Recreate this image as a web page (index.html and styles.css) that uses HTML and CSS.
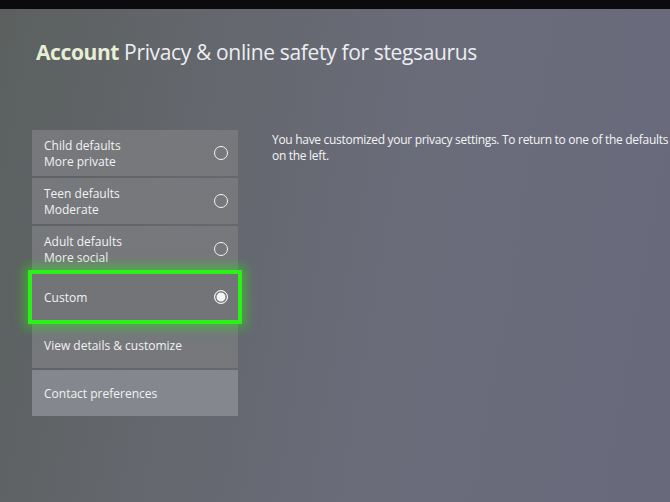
FILE: index.html
```html
<!DOCTYPE html>
<html lang="en">
<head>
    <meta charset="UTF-8">
    <meta name="viewport" content="width=device-width, initial-scale=1.0">
    <title>Privacy &amp; online safety</title>
    <link rel="stylesheet" href="styles.css">
</head>
<body>
<div class="bezel"></div>
<div class="screen">
    <h1 class="title"><span class="section">Account</span> Privacy &amp; online safety for stegsaurus</h1>
    <div class="content">
        <div class="menu">
            <div class="tile">
                <div class="label">Child defaults<br>More private</div>
                <span class="radio"></span>
            </div>
            <div class="tile">
                <div class="label">Teen defaults<br>Moderate</div>
                <span class="radio"></span>
            </div>
            <div class="tile">
                <div class="label">Adult defaults<br>More social</div>
                <span class="radio"></span>
            </div>
            <div class="tile focused">
                <div class="label">Custom</div>
                <span class="radio checked"></span>
            </div>
            <div class="tile">
                <div class="label">View details &amp; customize</div>
            </div>
            <div class="tile light">
                <div class="label">Contact preferences</div>
            </div>
        </div>
        <p class="info">You have customized your privacy settings. To return to one of the defaults<br>on the left.</p>
    </div>
</div>
</body>
</html>
```

FILE: styles.css
```css
html, body {
    margin: 0;
    height: 100%;
    overflow: hidden;
}
body {
    background: linear-gradient(100deg, #5b605f 0%, #64676d 30%, #6a6c7a 60%, #686a7c 100%);
    color: #f2f2f2;
    font-family: "Open Sans", "Noto Sans", sans-serif;
}
.bezel {
    height: 9px;
    background: #0b0b0d;
}
.screen {
    padding: 29px 0 0 36px;
}
.title {
    margin: 0;
    font-size: 21px;
    font-weight: 400;
    letter-spacing: -0.35px;
    color: #eceef2;
    white-space: nowrap;
}
.section {
    font-weight: 700;
    color: #e6efd6;
    letter-spacing: -0.4px;
}
.content {
    display: flex;
    gap: 34px;
    margin-top: 64px;
    margin-left: -4px;
}
.menu {
    display: flex;
    flex-direction: column;
    gap: 2px;
    width: 206px;
    flex-shrink: 0;
}
.tile {
    display: flex;
    align-items: center;
    justify-content: space-between;
    height: 46px;
    padding: 0 10px 0 12px;
    background: #76787c;
    box-sizing: border-box;
    font-size: 12px;
    line-height: 16px;
}
.tile.light {
    background: #84888e;
}
.tile.focused {
    background: #727478;
    outline: 4px solid #2cf01a;
    box-shadow: 0 0 10px 8px rgba(40, 230, 20, 0.5);
    position: relative;
    z-index: 1;
}
.label {
    padding-top: 1px;
}
.radio {
    width: 12px;
    height: 12px;
    border: 1.5px solid #f4f4f4;
    border-radius: 50%;
}
.radio.checked {
    background: #f4f4f4;
    box-shadow: inset 0 0 0 1.5px #727478;
}
.info {
    margin: 2px 0 0;
    font-size: 12px;
    line-height: 16px;
    white-space: nowrap;
    letter-spacing: -0.3px;
    color: #f4f4f4;
}
```
